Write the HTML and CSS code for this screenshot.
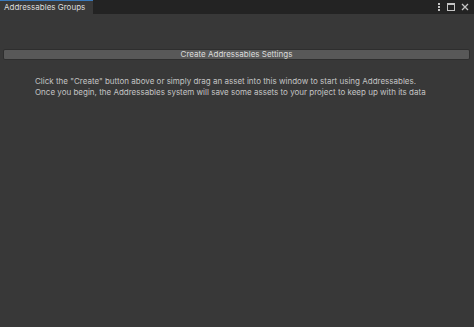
FILE: index.html
```html
<!DOCTYPE html>
<html>
<head>
<meta charset="utf-8">
<link rel="stylesheet" href="styles.css">
</head>
<body>
<div class="window">
  <div class="tabbar">
    <div class="tab">Addressables Groups</div>
    <div class="tab-spacer"></div>
    <div class="tab-icons">
      <svg class="icon" width="4" height="8" viewBox="0 0 4 8"><rect x="1" y="0" width="2" height="2" fill="#c4c4c4"/><rect x="1" y="3" width="2" height="2" fill="#c4c4c4"/><rect x="1" y="6" width="2" height="2" fill="#c4c4c4"/></svg>
      <svg class="icon" width="8" height="8" viewBox="0 0 8 8"><rect x="0.5" y="0.5" width="7" height="7" fill="none" stroke="#c4c4c4"/><rect x="0" y="0" width="8" height="2" fill="#c4c4c4"/></svg>
      <svg class="icon" width="8" height="8" viewBox="0 0 8 8"><path d="M1 1 L7 7 M7 1 L1 7" stroke="#c4c4c4" stroke-width="1.3"/></svg>
    </div>
  </div>
  <div class="content">
    <div class="create-btn">Create Addressables Settings</div>
    <div class="info">
      <p>Click the "Create" button above or simply drag an asset into this window to start using Addressables.</p>
      <p>Once you begin, the Addressables system will save some assets to your project to keep up with its data</p>
    </div>
  </div>
</div>
</body>
</html>
```

FILE: styles.css
```css
html, body {
  margin: 0;
  padding: 0;
  background: #383838;
  width: 474px;
  height: 327px;
  overflow: hidden;
  font-family: Inter, "Noto Sans", sans-serif;
}
.window {
  display: flex;
  flex-direction: column;
  height: 327px;
}
.tabbar {
  display: flex;
  height: 14px;
  background: #232323;
  flex: none;
}
.tab {
  width: 93px;
  box-sizing: border-box;
  background: #383838;
  border-top: 1px solid #3a79bb;
  color: #dcdcdc;
  font-size: 8px;
  line-height: 13px;
  padding-left: 4px;
  white-space: nowrap;
}
.tab-spacer { flex: 1; }
.tab-icons {
  display: flex;
  align-items: center;
  gap: 6px;
  padding-right: 5px;
  padding-bottom: 1px;
}
.icon { display: block; }
.content {
  flex: 1;
  padding: 35px 4px 0 3px;
}
.create-btn {
  height: 11px;
  box-sizing: border-box;
  background: #585858;
  border: 1px solid #2e2e2e;
  border-radius: 2px;
  color: #dcdcdc;
  font-size: 8px;
  line-height: 9px;
  text-align: center;
}
.info {
  margin-top: 16px;
  padding-left: 32px;
  color: #c4c4c4;
  font-size: 8px;
  line-height: 11px;
}
.info p {
  margin: 0;
  white-space: nowrap;
}
```
